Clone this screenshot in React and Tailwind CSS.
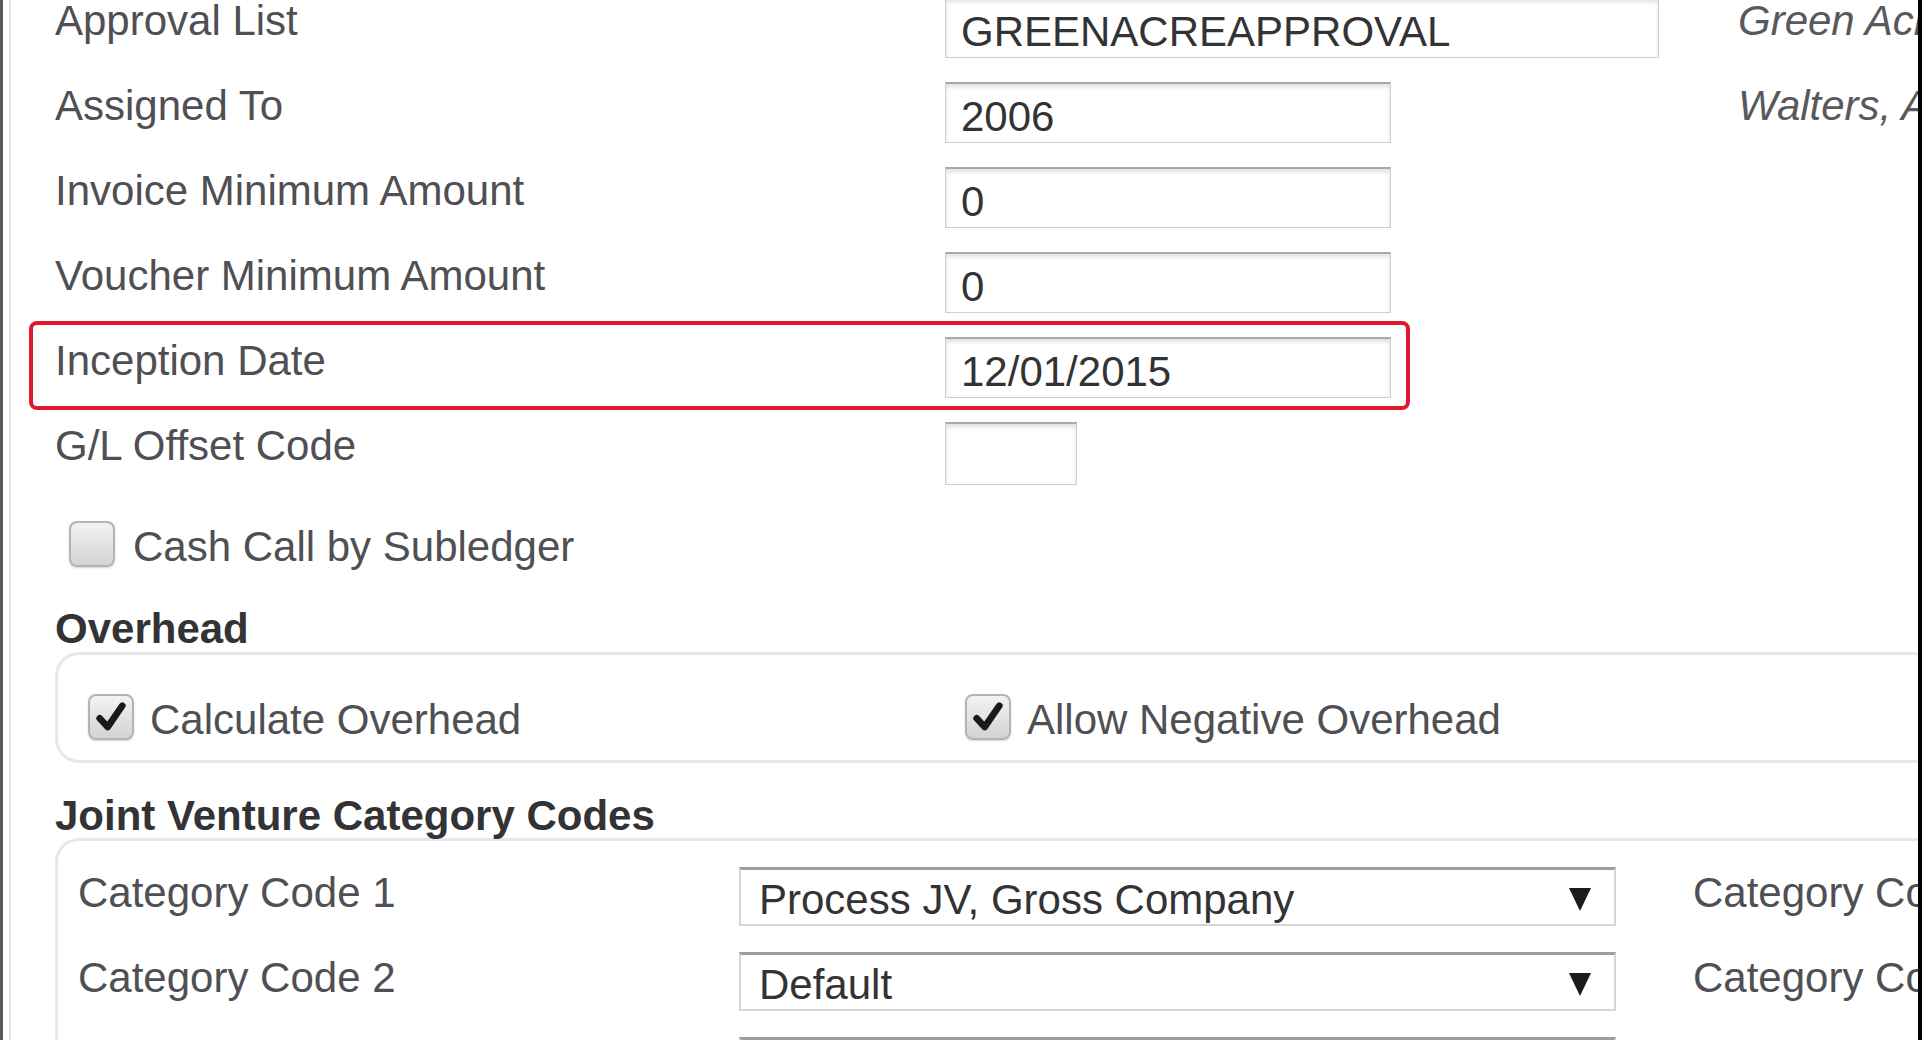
import React from "react";

const Box = ({ w, h = "h-[61px]", children }) => (
  <div
    className={`${w} ${h} flex items-center pl-[15px] pt-[6px] bg-white border border-[#cfcfcf] border-t-2 border-t-[#a9a9a9] shadow-[inset_0_3px_4px_rgba(0,0,0,0.12)] text-[#333336]`}
  >
    {children}
  </div>
);

const Check = ({ checked }) => (
  <div className="w-[46px] h-[46px] shrink-0 flex items-center justify-center rounded-[8px] border-2 border-[#b4b4b4] bg-gradient-to-b from-[#f3f3f3] to-[#d3d3d3] shadow-[0_1px_2px_rgba(0,0,0,0.18)]">
    {checked && (
      <svg width="32" height="32" viewBox="0 0 24 24">
        <path d="M3.5 13 L9.5 19.5 L20.5 3.5" fill="none" stroke="#1a1a1a" strokeWidth="5" strokeLinecap="round" strokeLinejoin="round" />
      </svg>
    )}
  </div>
);

const Select = ({ value }) => (
  <div className="h-[59px] w-[877px] flex items-center justify-between pl-[18px] pr-[22px] pt-[4px] bg-white border-2 border-[#d6d6d6] border-t-[3px] border-t-[#9e9e9e] text-[#333336]">
    <span>{value}</span>
    <svg width="24" height="26" viewBox="0 0 24 26">
      <polygon points="1,2 23,2 12,25" fill="#1c1c1c" />
    </svg>
  </div>
);

function Row({ label, children, side, highlight }) {
  return (
    <div className="relative grid grid-cols-[890px_793px_1fr] items-start">
      {highlight && (
        <div className="absolute -left-[26px] -top-[16px] w-[1381px] h-[89px] rounded-[8px] border-[4px] border-[#e0192f]" />
      )}
      <div className="text-[#4f4f54]">{label}</div>
      <div>{children}</div>
      {side && <div className="italic text-[#58585e] whitespace-nowrap">{side}</div>}
    </div>
  );
}

export default function App() {
  return (
    <div className="w-[1922px] h-[1040px] overflow-hidden bg-white flex font-['Liberation_Sans',Arial,sans-serif] text-[42px] leading-[47px]">
      <div className="w-[3px] bg-[#5a5a5a]" />
      <div className="w-[6px] bg-white" />
      <div className="w-[2px] bg-[#e4e4ec]" />

      <div className="flex-1 overflow-hidden pl-[44px]">
        <div className="flex flex-col gap-[24px] -mt-[3px]">
          <Row label="Approval List" side="Green Acre Approval">
            <Box w="w-[714px]">GREENACREAPPROVAL</Box>
          </Row>
          <Row label="Assigned To" side="Walters, Alan">
            <Box w="w-[446px]">2006</Box>
          </Row>
          <Row label="Invoice Minimum Amount">
            <Box w="w-[446px]">0</Box>
          </Row>
          <Row label="Voucher Minimum Amount">
            <Box w="w-[446px]">0</Box>
          </Row>
          <Row label="Inception Date" highlight>
            <Box w="w-[446px]">12/01/2015</Box>
          </Row>
          <Row label="G/L Offset Code">
            <Box w="w-[132px]" h="h-[63px]" />
          </Row>
        </div>

        <div className="mt-[32px] pl-[14px] flex items-center gap-[18px]">
          <Check />
          <span className="pt-[6px] text-[#4f4f54]">Cash Call by Subledger</span>
        </div>

        <h3 className="mt-[35px] leading-[47px] font-bold text-[#333336]">Overhead</h3>
        <div className="w-[1900px] h-[111px] rounded-[24px] border-[3px] border-[#e7e7e7] pl-[30px] pt-[35px] grid grid-cols-[877px_auto] items-start">
          <div className="flex items-center gap-[16px]">
            <Check checked />
            <span className="pt-[6px] text-[#4f4f54]">Calculate Overhead</span>
          </div>
          <div className="flex items-center gap-[16px]">
            <Check checked />
            <span className="pt-[6px] text-[#4f4f54]">Allow Negative Overhead</span>
          </div>
        </div>

        <h3 className="mt-[30px] leading-[45px] font-bold text-[#333336]">Joint Venture Category Codes</h3>
        <div className="w-[1900px] h-[400px] rounded-[24px] border-[3px] border-[#e7e7e7] pt-[26px] pl-[20px] flex flex-col gap-[26px]">
          {[
            ["Category Code 1", "Process JV, Gross Company", "Category Code 6"],
            ["Category Code 2", "Default", "Category Code 7"],
            ["Category Code 3", "Default", "Category Code 8"],
          ].map(([l, v, r]) => (
            <div key={l} className="grid grid-cols-[661px_877px_1fr] items-start">
              <div className="pt-[2px] text-[#4f4f54]">{l}</div>
              <Select value={v} />
              <div className="pl-[77px] pt-[2px] text-[#4f4f54] whitespace-nowrap">{r}</div>
            </div>
          ))}
        </div>
      </div>

      <div className="w-[4px] bg-black" />
    </div>
  );
}
